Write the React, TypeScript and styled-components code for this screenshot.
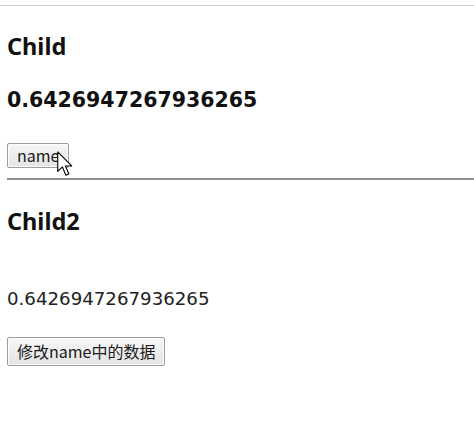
import React from "react";
import styled, { createGlobalStyle } from "styled-components";

const Global = createGlobalStyle`
  html, body { margin: 0; padding: 0; background: #ffffff; }
  body { font-family: "Noto Sans", "Noto Sans CJK SC", sans-serif; color: #111; }
`;

const Page = styled.div`
  position: relative;
  padding-top: 5px;
  min-height: 421px;
  box-sizing: border-box;
`;

const TopRule = styled.div`
  height: 1px;
  background: #cfcfcf;
`;

const Section = styled.section`
  padding-left: 7px;
  display: flex;
  flex-direction: column;
  align-items: flex-start;
`;

const Heading = styled.h3<{ $top: number }>`
  margin: ${(p) => p.$top}px 0 0 0;
  font-family: "Noto Sans", sans-serif;
  font-weight: 700;
  font-size: 23.5px;
  line-height: 32px;
  color: #111;
`;

const BigNumber = styled.h3<{ $top: number }>`
  margin: ${(p) => p.$top}px 0 0 0;
  font-family: "DejaVu Sans", sans-serif;
  font-weight: 700;
  font-size: 20.5px;
  line-height: 24px;
  color: #111;
`;

const PlainNumber = styled.p<{ $top: number }>`
  margin: ${(p) => p.$top}px 0 0 0;
  font-family: "DejaVu Sans", sans-serif;
  font-weight: 400;
  font-size: 18.2px;
  line-height: 21px;
  color: #222;
`;

const Button = styled.button<{ $top: number; $tall?: boolean }>`
  margin: ${(p) => p.$top}px 0 0 0;
  font-family: "Noto Sans CJK SC", "Noto Sans", sans-serif;
  font-size: 16px;
  line-height: ${(p) => (p.$tall ? 23 : 19)}px;
  padding: 2px 9px;
  color: #1a1a1a;
  background: linear-gradient(#f7f7f7, #e3e3e3);
  border: 1px solid #9c9c9c;
  border-radius: 2px;
  box-shadow: inset 0 0 0 1px #fdfdfd;
  cursor: default;
`;

const Rule = styled.div`
  margin: 10px 0 0 7px;
  height: 2px;
  background: #8f8f8f;
`;

const Cursor = styled.svg`
  position: absolute;
  left: 57px;
  top: 151px;
  width: 16px;
  height: 26px;
  pointer-events: none;
`;

export default function App() {
  const value = "0.6426947267936265";
  return (
    <>
      <Global />
      <Page>
        <TopRule />
        <Section>
          <Heading $top={24}>Child</Heading>
          <BigNumber $top={26}>{value}</BigNumber>
          <Button $top={31}>name</Button>
        </Section>
        <Rule />
        <Section>
          <Heading $top={25}>Child2</Heading>
          <PlainNumber $top={51}>{value}</PlainNumber>
          <Button $top={28} $tall>修改name中的数据</Button>
        </Section>
        <Cursor viewBox="0 0 13 21">
          <path
            d="M0.6 0.6 L0.6 16.5 L4.4 12.9 L7.2 19.6 L9.6 18.6 L6.9 12.1 L11.9 12.1 Z"
            fill="#ffffff"
            stroke="#000000"
            strokeWidth="0.9"
            strokeLinejoin="round"
          />
        </Cursor>
      </Page>
    </>
  );
}
